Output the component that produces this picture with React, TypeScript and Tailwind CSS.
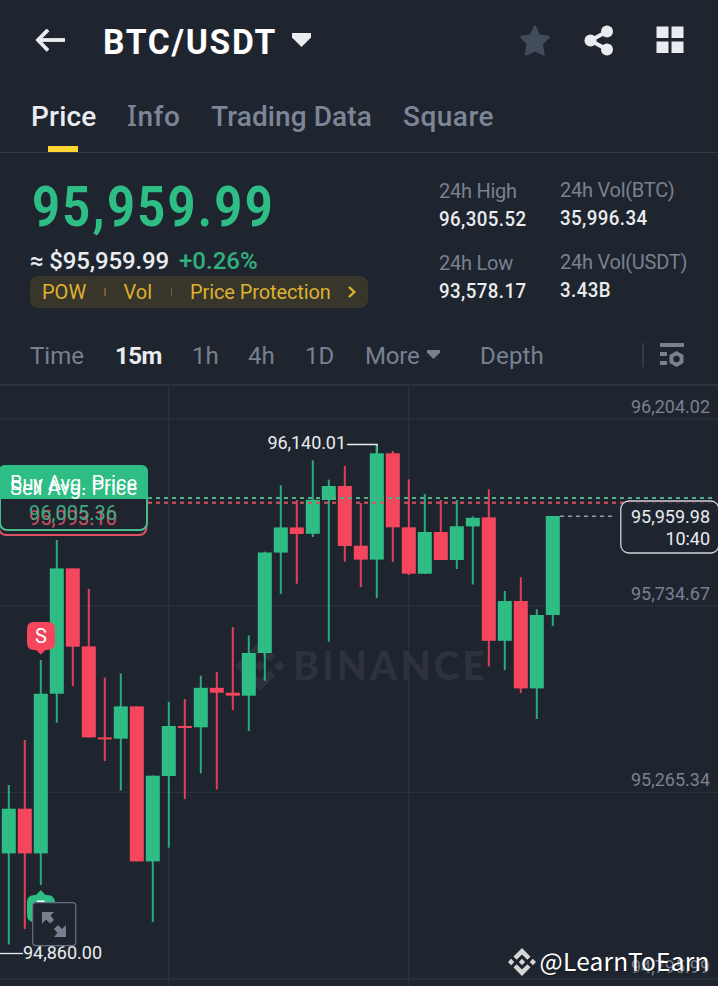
import React from "react";

type Candle = [up: boolean, high: number, top: number, bottom: number, low: number];

const candles: Candle[] = [
  [true, 785, 808.7, 853.4, 944.5],
  [false, 740, 808.7, 853.4, 929],
  [true, 660, 693.7, 853.4, 885],
  [true, 540, 568.4, 693.7, 722.7],
  [false, 568.4, 568.4, 646.7, 686],
  [false, 589, 646.4, 737.4, 737.4],
  [false, 677.5, 737.4, 739.4, 761],
  [true, 673.5, 706.4, 738.7, 790.5],
  [false, 706.4, 706.4, 861.4, 861.4],
  [true, 775.5, 775.7, 861.4, 922],
  [true, 702, 726, 776, 847.7],
  [false, 699, 726, 728, 799],
  [true, 675.7, 687.8, 727.3, 773.5],
  [false, 672, 687.8, 692.7, 789.5],
  [false, 627, 692.7, 695.7, 710],
  [true, 635.5, 653, 695.7, 731],
  [true, 551.7, 552.5, 653, 680.7],
  [true, 485.3, 527.4, 552.6, 594],
  [false, 500, 527.4, 534, 583.7],
  [true, 460.3, 499.8, 533.8, 537],
  [true, 479.7, 486, 500, 641.7],
  [false, 466, 486, 546, 561.7],
  [false, 503, 545.7, 559.6, 587],
  [true, 444.5, 453.3, 559.6, 598],
  [false, 451, 453.3, 527.3, 562],
  [false, 479.3, 527.3, 573.7, 575],
  [true, 494, 532, 573.7, 573.7],
  [false, 500, 532, 560, 560],
  [true, 500, 526.3, 560, 569],
  [true, 516.5, 517.8, 526.4, 584.5],
  [false, 489.3, 517.4, 640.8, 666.5],
  [true, 591, 601, 640.8, 670],
  [false, 577.3, 601, 688.4, 693],
  [true, 609.3, 615, 688.4, 719],
  [true, 516, 516, 615, 626],
];

const GREEN = "#2ebd85";
const RED = "#f6465d";

function Stat({ label, value }: { label: string; value: string }) {
  return (
    <div className="h-[72px] whitespace-nowrap text-[20px]">
      <div className="h-7 leading-7 tracking-[-0.25px] text-[#78818f]">{label}</div>
      <div className="h-7 origin-left scale-x-[0.935] font-medium leading-[29px] tracking-[0.45px] text-[#eaecef]">{value}</div>
    </div>
  );
}

function BinanceMark({ cx, cy, r, fill }: { cx: number; cy: number; r: number; fill: string }) {
  return (
    <g transform={`translate(${cx} ${cy}) scale(${r / 16})`} fill={fill}>
      <path d="M-6.1-2.6 0-8.7l6.1 6.1 3.6-3.5L0-16-9.7-6.2Z" />
      <path d="M-6.1 2.6 0 8.7l6.1-6.1 3.6 3.5L0 16-9.7 6.2Z" />
      <path d="M-16 0l3.6-3.6L-8.9 0l-3.5 3.6ZM8.9 0l3.5-3.6L16 0l-3.6 3.6ZM-3.6 0 0-3.6 3.6 0 0 3.6Z" />
    </g>
  );
}

function Chart() {
  return (
    <svg className="block h-[602px] w-[718px] shrink-0 font-[Roboto,sans-serif]" viewBox="0 384 718 602">
      <g fill="#2b313d">
        <rect x="0" y="384" width="718" height="2" />
        <rect x="0" y="418.3" width="718" height="1.4" />
        <rect x="0" y="605" width="718" height="1.2" />
        <rect x="0" y="791.8" width="718" height="1.2" />
        <rect x="0" y="978.3" width="718" height="1.5" />
        <rect x="168" y="385" width="1.3" height="601" />
        <rect x="408" y="385" width="1.3" height="601" />
      </g>

      <BinanceMark cx={260} cy={666} r={25} fill="#2d323d" />
      <text x="293" y="680.3" fontSize="39" fontWeight="900" fill="#2d323d" textLength="192" className="font-[Lato,sans-serif]">BINANCE</text>

      {candles.map(([up, high, top, bottom, low], i) => {
        const x = 8.8 + i * 16;
        return (
          <g key={i} fill={up ? GREEN : RED}>
            <rect x={x - 1} y={high} width="2" height={low - high} opacity="0.88" />
            <rect x={x - 7} y={top} width="14" height={bottom - top} />
          </g>
        );
      })}

      <path d="M148 498H714" stroke="#51ad87" strokeWidth="2" strokeDasharray="4 4" />
      <path d="M148 502.8H714" stroke="#dc5163" strokeWidth="2" strokeDasharray="4 4" />
      <path d="M560 516.2H612" stroke="#9499a2" strokeWidth="1.6" strokeDasharray="4 4" />

      <g fill="#78818f" fontSize="18">
        <text x="631" y="413" textLength="79">96,204.02</text>
        <text x="631" y="599.7" textLength="79">95,734.67</text>
        <text x="631" y="786" textLength="79">95,265.34</text>
        <text x="631" y="973" textLength="79">94,795.99</text>
      </g>

      <g fontSize="18" fill="#eaecef">
        <text x="267.5" y="449" textLength="78.5">96,140.01</text>
        <path d="M347 444.5H377V451" fill="none" stroke="#eaecef" strokeWidth="1.3" />
        <path d="M376.8 446V454" stroke={GREEN} strokeWidth="2" />
        <path d="M0 953.5H23" stroke="#eaecef" strokeWidth="1.3" />
        <text x="23" y="958.8" textLength="79">94,860.00</text>
      </g>

      <rect x="620.8" y="501" width="98" height="52" rx="8" fill="#1f252f" fillOpacity="0.88" stroke="#cfd2d7" strokeWidth="1.3" />
      <g fontSize="18" fill="#eaecef">
        <text x="631" y="523" textLength="79">95,959.98</text>
        <text x="665.5" y="545" textLength="44.5">10:40</text>
      </g>

      <rect x="-1" y="470" width="147.4" height="65" rx="7" fill="#1f252f" stroke="#dc5163" strokeWidth="2" />
      <rect x="0" y="466" width="147" height="64" rx="7" fill="#1f252f" stroke="#4dba8d" strokeWidth="2" />
      <path d="M0 467Q2 465 5 465H141Q148 465 148 472V499H0Z" fill={GREEN} />
      <g fontSize="20">
        <text x="10" y="489.5" fill="#fff" textLength="127">Buy Avg. Price</text>
        <text x="10" y="495" fill="#fff" textLength="127">Sell Avg. Price</text>
        <text x="29" y="525" fill="#d34f60" textLength="88">95,993.10</text>
        <text x="29" y="519.7" fill="#3dab7f" textLength="88">96,005.36</text>
      </g>

      <path d="M34 622H48Q55 622 55 629V643Q55 650 47 650H45.5L40.8 654.5 36 650H34Q27 650 27 643V629Q27 622 34 622Z" fill={RED} />
      <text x="41" y="643" fontSize="20" textAnchor="middle" fill="#fff">S</text>

      <path d="M40.8 890 45.5 895H47Q55 895 55 903V922H34Q27 922 27 915V902Q27 895 35 895H36Z" fill={GREEN} />
      <rect x="37" y="900.5" width="7.5" height="2" fill="#fff" />
      <rect x="32.7" y="902.6" width="43" height="43" rx="3" fill="#1f252f" stroke="#697180" strokeWidth="1.2" />
      <path d="M42 912H54L50.5 915.5 54 920 50 923.5 46 919.5 42 924ZM66 937H54L57.5 933 54 929 58 925 62 929 66 925Z" fill="#788090" />

      <BinanceMark cx={522} cy={962} r={14} fill="#d6d6d7" />
      <text
        x="539.5"
        y="971"
        fontSize="24.5"
        fill="#fff"
        textLength="170"
        className="font-['Noto_Sans_CJK_SC','Noto_Sans',sans-serif] [text-shadow:1px_1px_1px_#00000066]"
      >
        @LearnToEarn
      </text>
    </svg>
  );
}

export default function App() {
  return (
    <div className="flex h-[986px] w-[718px] flex-col overflow-hidden bg-[#1f252f] font-[Roboto,sans-serif] text-[#eaecef]">
      <header className="flex h-[82px] shrink-0 items-center pl-[35px] pr-[34px]">
        <svg className="h-6 w-[30px] shrink-0" viewBox="0 0 30 24" fill="none" stroke="#eaecef" strokeWidth="3.8">
          <path d="M13 0.800 3 11 13 21.500" />
          <path d="M3 11H30" />
        </svg>
        <h1 className="ml-[38px] w-[189px] origin-left scale-x-[0.96] whitespace-nowrap pt-[3px] text-[35px] font-bold leading-[44px] tracking-[1.8px] text-white">BTC/USDT</h1>
        <svg className="mb-[2px] h-[14px] w-[19px]" viewBox="0 0 19 14" fill="#eaecef">
          <path d="M0 0H19V4.500L9.500 14 0 4.500Z" />
        </svg>
        <div className="ml-auto flex items-center pb-[2px]">
          <svg className="h-[31px] w-[31px]" viewBox="0 0 31 31" fill="#434c5a" stroke="#434c5a" strokeWidth="2.500" strokeLinejoin="round">
            <path d="M15 1.800 18.800 10.500 28.500 12 21.500 18.800 23.500 29.300 15 25 6 29.300 8 18.800 1.500 12 11 10.500Z" />
          </svg>
          <svg className="ml-[33px] h-[31px] w-[30px]" viewBox="0 0 30 31" fill="#eaecef">
            <path d="M23 6.500 6.500 15.500 23 24.500" fill="none" stroke="#eaecef" strokeWidth="4" />
            <circle cx="6.500" cy="15.500" r="6" />
            <circle cx="23" cy="6.500" r="6" />
            <circle cx="23" cy="24.500" r="6" />
          </svg>
          <svg className="ml-[42px] h-7 w-7" viewBox="0 0 28 28" fill="#eaecef">
            <path d="M0.500 0.500H12.500V12H0.500ZM15.500 0.500H27.500V12H15.500ZM0.500 15.500H12.500V27H0.500ZM15.500 15.500H27.500V27H15.500Z" />
          </svg>
        </div>
      </header>

      <nav className="flex h-[71px] shrink-0 items-stretch border-b border-[#343b46] pl-[31px] text-[28px] font-medium leading-[70px] text-[#7d8696]">
        <div className="flex w-24 flex-col whitespace-nowrap text-[#eaecef]">
          <span className="h-16 tracking-[0.2px]">Price</span>
          <span className="ml-[17px] h-[6px] w-[30px] bg-[#fcd535]" />
        </div>
        <span className="w-[84px] whitespace-nowrap tracking-[0.5px]">
          <span className="font-['Noto_Sans',sans-serif] leading-none">I</span>nfo
        </span>
        <span className="w-48 whitespace-nowrap tracking-[0.1px]">Trading Data</span>
        <span className="whitespace-nowrap tracking-[0.5px]">Square</span>
      </nav>

      <section className="flex h-[173px] shrink-0">
        <div className="flex w-[439px] flex-col pl-[30px]">
          <div className="ml-[2px] mt-[22px] h-16 origin-left scale-x-[0.87] whitespace-nowrap text-[56px] font-bold leading-[64px] tracking-[2.7px] text-[#2ebd85]">95,959.99</div>
          <div className="mt-[7px] flex h-[30px] items-center whitespace-nowrap text-[24px] font-medium">
            <span className="w-[149px] tracking-[-0.15px]">≈ $95,959.99</span>
            <span className="text-[#32af7e]">+0.26%</span>
          </div>
          <div className="flex h-8 w-[338px] items-center whitespace-nowrap rounded-lg bg-[#38352b] pl-3 text-[20px] text-[#deb12f]">
            <span className="w-[62px]">POW</span>
            <span className="h-2 w-[1.500px] bg-[#74602c]" />
            <span className="ml-[18px] w-[47px]">Vol</span>
            <span className="h-2 w-[1.500px] bg-[#74602c]" />
            <span className="ml-[18px] w-[158px] tracking-[-0.1px]">Price Protection</span>
            <svg className="h-3 w-2" viewBox="0 0 8 12" fill="none" stroke="#deb12f" strokeWidth="2.400">
              <path d="M1 1 6.300 6 1 11" />
            </svg>
          </div>
        </div>
        <div className="w-[121px] pt-6">
          <Stat label="24h High" value="96,305.52" />
          <Stat label="24h Low" value="93,578.17" />
        </div>
        <div className="pt-[23px]">
          <Stat label="24h Vol(BTC)" value="35,996.34" />
          <Stat label="24h Vol(USDT)" value="3.43B" />
        </div>
      </section>

      <div className="flex h-[58px] shrink-0 items-center whitespace-nowrap pl-[30px] pt-[2px] text-[24px] text-[#78818f]">
        <span className="w-[85px]">Time</span>
        <span className="w-[77px] font-bold tracking-[-0.5px] text-[#eaecef]">15m</span>
        <span className="w-[56px]">1h</span>
        <span className="w-[57px]">4h</span>
        <span className="w-[60px]">1D</span>
        <span className="w-[62px] tracking-[-0.2px]">More</span>
        <svg className="mb-1 h-[9px] w-[13px]" viewBox="0 0 13 9" fill="#78818f">
          <path d="M0 0H13V2.500L6.500 9 0 2.500Z" />
        </svg>
        <span className="ml-[40px] w-[162px] tracking-[0.2px]">Depth</span>
        <span className="mb-[2px] h-6 w-[1.500px] bg-[#343b46]" />
        <svg className="mb-[2px] ml-4 h-6 w-6" viewBox="0 0 24 24" fill="#78818f">
          <path d="M0 0H24V4H0ZM0 9H7V13H0ZM0 18H7V22H0Z" />
          <path fillRule="evenodd" d="M16.500 8 23.500 12V20L16.500 24 9.500 20V12ZM16.500 12.800A3.200 3.200 0 1 0 16.500 19.200 3.200 3.200 0 1 0 16.500 12.800Z" />
        </svg>
      </div>

      <Chart />
    </div>
  );
}
